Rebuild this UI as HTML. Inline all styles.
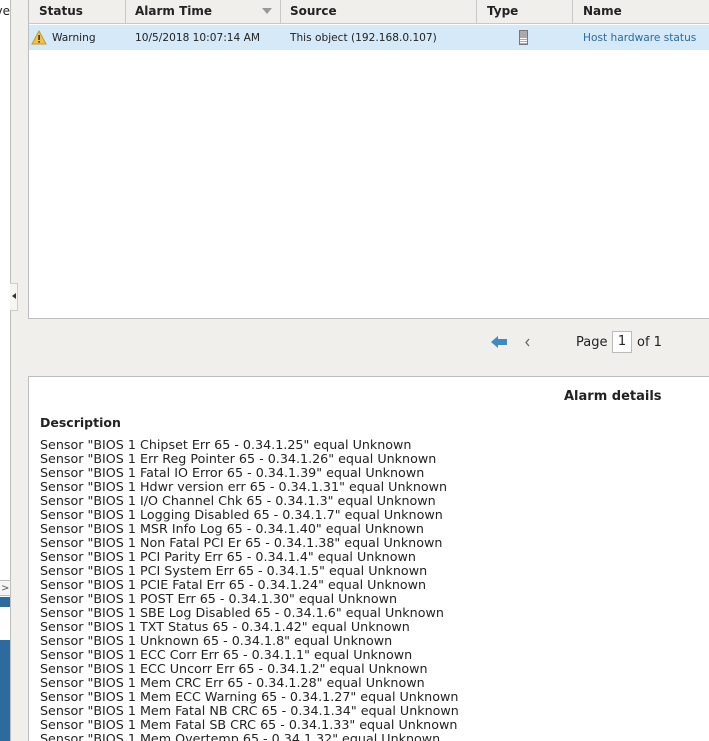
<!DOCTYPE html>
<html><head><style>
*{margin:0;padding:0;box-sizing:border-box}
html,body{overflow:hidden}
body{width:709px;height:741px;background:#f0efeb;position:relative;font-family:"DejaVu Sans","Liberation Sans",sans-serif}
.a{position:absolute}
.hd{font-weight:bold;font-size:12px;color:#222;top:4px}
.cell{font-size:10.6px;color:#222;top:32px}
.vl{position:absolute;top:0;width:1px;height:24px;background:#c8c8c8}
.lines div{font-size:12.7px;line-height:14px;color:#222;white-space:nowrap}
</style></head><body>
<div class="a" style="left:0;top:0;width:10px;height:741px;background:#fff"></div>
<div class="a" style="left:0;top:4px;font-size:12px;color:#222;width:10px;overflow:hidden;white-space:nowrap;direction:rtl">rve</div>
<div class="a" style="left:10px;top:0;width:1px;height:741px;background:#bdbdbd"></div>
<div class="a" style="left:10px;top:283px;width:8px;height:28px;background:#f5f5f2;border:1px solid #ccc;border-left:none"></div>
<div class="a" style="left:12px;top:293px;width:0;height:0;border-top:3px solid transparent;border-bottom:3px solid transparent;border-right:4px solid #333"></div>
<div class="a" style="left:0;top:580px;width:10px;height:16px;background:#f5f5f5;border-top:1px solid #bbb;border-bottom:1px solid #bbb"></div>
<div class="a" style="left:1px;top:583px;font-size:10px;color:#555">&gt;</div>
<div class="a" style="left:0;top:597px;width:10px;height:10px;background:#2d6aa0"></div>
<div class="a" style="left:0;top:640px;width:10px;height:101px;background:#2d6aa0"></div>

<div class="a" style="left:28px;top:0;width:681px;height:319px;background:#fff;border-left:1px solid #bdbdbd;border-bottom:1px solid #bdbdbd"></div>
<div class="a" style="left:29px;top:0;width:680px;height:24px;background:#f0efeb;border-bottom:1px solid #c8c8c8"></div>
<div class="vl" style="left:125px"></div><div class="vl" style="left:280px"></div><div class="vl" style="left:476px"></div><div class="vl" style="left:572px"></div>
<div class="a hd" style="left:39px">Status</div>
<div class="a hd" style="left:135px">Alarm Time</div>
<div class="a" style="left:262px;top:8px;border-left:5px solid transparent;border-right:5px solid transparent;border-top:6px solid #999"></div>
<div class="a hd" style="left:290px">Source</div>
<div class="a hd" style="left:487px">Type</div>
<div class="a hd" style="left:583px">Name</div>
<div class="a" style="left:29px;top:25px;width:680px;height:25px;background:#d5e9f8"></div>
<svg class="a" style="left:31px;top:30px" width="16" height="15"><path d="M8 1 L15 14 L1 14 Z" fill="#f0c24a" stroke="#c99a20"/><rect x="7.3" y="5" width="1.6" height="5" fill="#333"/><rect x="7.3" y="11" width="1.6" height="1.6" fill="#333"/></svg>
<div class="a cell" style="left:52px">Warning</div>
<div class="a cell" style="left:135px">10/5/2018 10:07:14 AM</div>
<div class="a cell" style="left:290px">This object (192.168.0.107)</div>
<div class="a" style="left:519px;top:30px;width:9px;height:15px;background:#aaa;border:1px solid #777"><div style="margin-top:7px;height:1px;background:#fff"></div><div style="margin-top:1px;height:1px;background:#fff"></div><div style="margin-top:1px;height:1px;background:#fff"></div></div>
<div class="a cell" style="left:583px;color:#2b6aa5">Host hardware status</div>

<svg class="a" style="left:490px;top:335px" width="18" height="14"><path d="M1 7 L8 1 L8 4 L17 4 L17 10 L8 10 L8 13 Z" fill="#3d8ac4"/></svg>
<svg class="a" style="left:524px;top:338px" width="8" height="9"><path d="M5 1 L2 4.5 L5 8" fill="none" stroke="#666" stroke-width="1.3"/></svg>
<div class="a" style="left:576px;top:335px;font-size:13px;color:#222">Page</div>
<div class="a" style="left:612px;top:331px;width:20px;height:22px;background:#fff;border:1px solid #bbb;font-size:13px;text-align:center;line-height:20px;color:#222">1</div>
<div class="a" style="left:637px;top:335px;font-size:13px;color:#222">of 1</div>

<div class="a" style="left:28px;top:376px;width:681px;height:365px;background:#fff;border-left:1px solid #bdbdbd;border-top:1px solid #bdbdbd"></div>
<div class="a" style="left:564px;top:389px;font-size:13px;font-weight:bold;color:#222">Alarm details</div>
<div class="a" style="left:40px;top:415px;font-size:12.5px;font-weight:bold;color:#222">Description</div>
<div class="a lines" style="left:40px;top:438px">
<div>Sensor "BIOS 1 Chipset Err 65 - 0.34.1.25" equal Unknown</div>
<div>Sensor "BIOS 1 Err Reg Pointer 65 - 0.34.1.26" equal Unknown</div>
<div>Sensor "BIOS 1 Fatal IO Error 65 - 0.34.1.39" equal Unknown</div>
<div>Sensor "BIOS 1 Hdwr version err 65 - 0.34.1.31" equal Unknown</div>
<div>Sensor "BIOS 1 I/O Channel Chk 65 - 0.34.1.3" equal Unknown</div>
<div>Sensor "BIOS 1 Logging Disabled 65 - 0.34.1.7" equal Unknown</div>
<div>Sensor "BIOS 1 MSR Info Log 65 - 0.34.1.40" equal Unknown</div>
<div>Sensor "BIOS 1 Non Fatal PCI Er 65 - 0.34.1.38" equal Unknown</div>
<div>Sensor "BIOS 1 PCI Parity Err 65 - 0.34.1.4" equal Unknown</div>
<div>Sensor "BIOS 1 PCI System Err 65 - 0.34.1.5" equal Unknown</div>
<div>Sensor "BIOS 1 PCIE Fatal Err 65 - 0.34.1.24" equal Unknown</div>
<div>Sensor "BIOS 1 POST Err 65 - 0.34.1.30" equal Unknown</div>
<div>Sensor "BIOS 1 SBE Log Disabled 65 - 0.34.1.6" equal Unknown</div>
<div>Sensor "BIOS 1 TXT Status 65 - 0.34.1.42" equal Unknown</div>
<div>Sensor "BIOS 1 Unknown 65 - 0.34.1.8" equal Unknown</div>
<div>Sensor "BIOS 1 ECC Corr Err 65 - 0.34.1.1" equal Unknown</div>
<div>Sensor "BIOS 1 ECC Uncorr Err 65 - 0.34.1.2" equal Unknown</div>
<div>Sensor "BIOS 1 Mem CRC Err 65 - 0.34.1.28" equal Unknown</div>
<div>Sensor "BIOS 1 Mem ECC Warning 65 - 0.34.1.27" equal Unknown</div>
<div>Sensor "BIOS 1 Mem Fatal NB CRC 65 - 0.34.1.34" equal Unknown</div>
<div>Sensor "BIOS 1 Mem Fatal SB CRC 65 - 0.34.1.33" equal Unknown</div>
<div>Sensor "BIOS 1 Mem Overtemp 65 - 0.34.1.32" equal Unknown</div>
</div>
</body></html>
